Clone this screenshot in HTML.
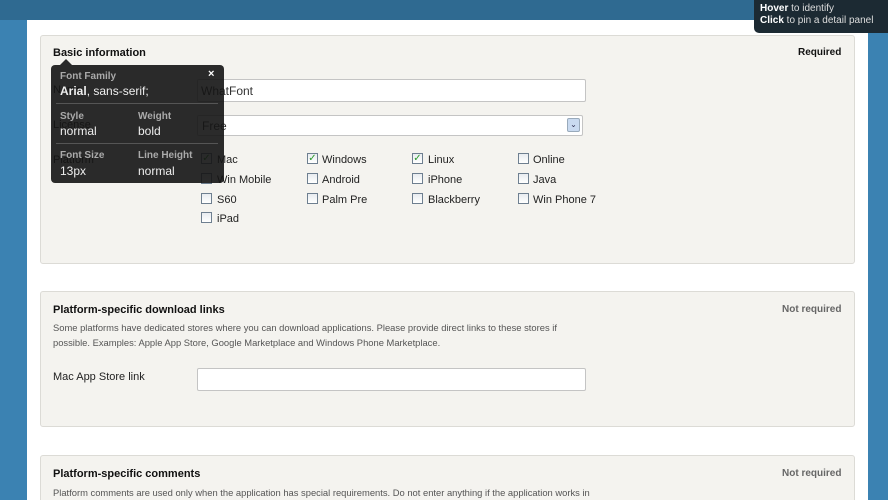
<!DOCTYPE html>
<html><head><style>
*{margin:0;padding:0;box-sizing:border-box}
html,body{width:888px;height:500px;overflow:hidden}
body{background:#3b82b2;font-family:"Liberation Sans",Arial,sans-serif;position:relative;color:#222}
.a{position:absolute;white-space:nowrap}
#top{left:0;top:0;width:888px;height:20px;background:#2f6a91}
#main{left:27px;top:20px;width:841px;height:480px;background:#fff}
.panel{position:absolute;left:40px;width:815px;background:#f4f3ef;border:1px solid #dcdbd6;border-radius:3px}
.h{font-size:11px;font-weight:bold;color:#111}
.r{font-size:10px;font-weight:bold;color:#111}
.nr{font-size:10px;font-weight:bold;color:#666}
.d{font-size:9.4px;color:#555;line-height:15px}
.lbl{font-size:11px;color:#222}
.inp{position:absolute;background:#fff;border:1px solid #c4c4c4;border-radius:2px}
.cb{position:absolute;width:11px;height:11px;border:1px solid #6e7f90;background:linear-gradient(#e8ecf0,#fff);font-size:10px;line-height:9px;color:#2a9a2a;text-align:center}
.ct{position:absolute;font-size:11px;color:#222}
#tip{left:51px;top:65px;width:173px;height:118px;background:rgba(20,20,20,.9);border-radius:4px;color:#fff}
#tip .k{position:absolute;font-size:10px;font-weight:bold;color:#aaa}
#tip .v{position:absolute;font-size:12px;color:#eee}
#tip .ln{position:absolute;left:5px;width:162px;height:1px;background:#555}
#hint{left:754px;top:0;width:134px;height:33px;background:#1c2a33;border-radius:0 0 0 5px;color:#ddd;font-size:10px;line-height:12px;padding:3px 0 0 6px}
</style></head><body>
<div class="a" id="top"></div>
<div class="a" id="main"></div>

<div class="panel" style="top:35px;height:229px"></div>
<div class="a h" style="left:53px;top:47px">Basic information</div>
<div class="a r" style="left:798px;top:47px">Required</div>
<div class="a lbl" style="left:53px;top:84px">Name</div>
<div class="a lbl" style="left:53px;top:119px">License</div>
<div class="a lbl" style="left:53px;top:154px">Platform</div>
<div class="inp" style="left:197px;top:79px;width:389px;height:23px"></div>
<div class="a" style="left:201px;top:84px;font-size:12px;color:#333">WhatFont</div>
<div class="inp" style="left:197px;top:115px;width:386px;height:21px"></div>
<div class="a" style="left:202px;top:119px;font-size:12px;color:#333">Free</div>
<div class="a" style="left:567px;top:118px;width:13px;height:14px;background:#c9daf0;border:1px solid #9ab;border-radius:2px;font-size:8px;color:#335;text-align:center;line-height:12px">&#8964;</div>

<div class="cb" style="left:201px;top:153px">&#10003;</div><div class="ct" style="left:217px;top:154px">Mac</div>
<div class="cb" style="left:201px;top:173px"></div><div class="ct" style="left:217px;top:174px">Win Mobile</div>
<div class="cb" style="left:201px;top:193px"></div><div class="ct" style="left:217px;top:194px">S60</div>
<div class="cb" style="left:201px;top:212px"></div><div class="ct" style="left:217px;top:213px">iPad</div>
<div class="cb" style="left:307px;top:153px">&#10003;</div><div class="ct" style="left:322px;top:154px">Windows</div>
<div class="cb" style="left:307px;top:173px"></div><div class="ct" style="left:322px;top:174px">Android</div>
<div class="cb" style="left:307px;top:193px"></div><div class="ct" style="left:322px;top:194px">Palm Pre</div>
<div class="cb" style="left:412px;top:153px">&#10003;</div><div class="ct" style="left:428px;top:154px">Linux</div>
<div class="cb" style="left:412px;top:173px"></div><div class="ct" style="left:428px;top:174px">iPhone</div>
<div class="cb" style="left:412px;top:193px"></div><div class="ct" style="left:428px;top:194px">Blackberry</div>
<div class="cb" style="left:518px;top:153px"></div><div class="ct" style="left:533px;top:154px">Online</div>
<div class="cb" style="left:518px;top:173px"></div><div class="ct" style="left:533px;top:174px">Java</div>
<div class="cb" style="left:518px;top:193px"></div><div class="ct" style="left:533px;top:194px">Win Phone 7</div>

<div class="panel" style="top:291px;height:136px"></div>
<div class="a h" style="left:53px;top:304px">Platform-specific download links</div>
<div class="a nr" style="left:782px;top:304px">Not required</div>
<div class="a d" style="left:53px;top:320px">Some platforms have dedicated stores where you can download applications. Please provide direct links to these stores if<br>possible. Examples: Apple App Store, Google Marketplace and Windows Phone Marketplace.</div>
<div class="a lbl" style="left:53px;top:371px">Mac App Store link</div>
<div class="inp" style="left:197px;top:368px;width:389px;height:23px"></div>

<div class="panel" style="top:455px;height:60px"></div>
<div class="a h" style="left:53px;top:468px">Platform-specific comments</div>
<div class="a nr" style="left:782px;top:468px">Not required</div>
<div class="a d" style="left:53px;top:485px">Platform comments are used only when the application has special requirements. Do not enter anything if the application works in</div>

<div class="a" id="tip">
<div class="a" style="left:9px;top:-6px;width:0;height:0;border-left:6px solid transparent;border-right:6px solid transparent;border-bottom:6px solid rgba(20,20,20,.9)"></div>
<div class="k" style="left:9px;top:6px">Font Family</div>
<div class="v" style="left:9px;top:19px"><b>Arial</b>, sans-serif;</div>
<div style="position:absolute;left:157px;top:3px;font-size:11px;font-weight:bold;color:#fff">&#215;</div>
<div class="ln" style="top:38px"></div>
<div class="k" style="left:9px;top:46px">Style</div><div class="v" style="left:9px;top:59px">normal</div>
<div class="k" style="left:87px;top:46px">Weight</div><div class="v" style="left:87px;top:59px">bold</div>
<div class="ln" style="top:78px"></div>
<div class="k" style="left:9px;top:85px">Font Size</div><div class="v" style="left:9px;top:99px">13px</div>
<div class="k" style="left:87px;top:85px">Line Height</div><div class="v" style="left:87px;top:99px">normal</div>
</div>

<div class="a" id="hint"><b style="color:#fff">Hover</b> to identify<br><b style="color:#fff">Click</b> to pin a detail panel</div>
</body></html>
